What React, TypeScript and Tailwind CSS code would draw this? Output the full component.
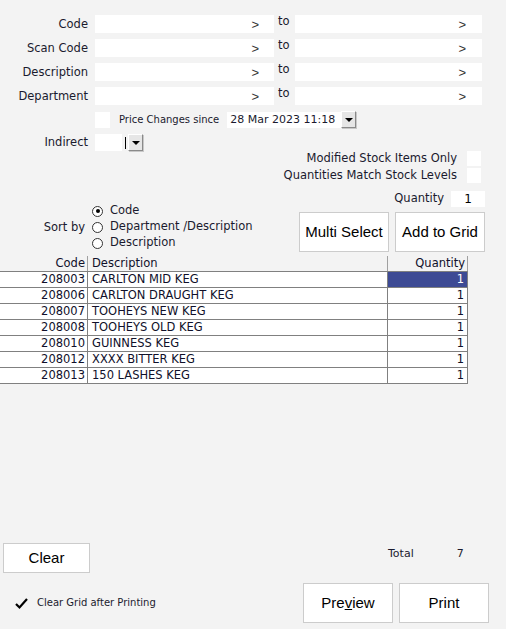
import React from "react";

const rows = [
  { code: "208003", desc: "CARLTON MID KEG", qty: 1 },
  { code: "208006", desc: "CARLTON DRAUGHT KEG", qty: 1 },
  { code: "208007", desc: "TOOHEYS NEW KEG", qty: 1 },
  { code: "208008", desc: "TOOHEYS OLD KEG", qty: 1 },
  { code: "208010", desc: "GUINNESS KEG", qty: 1 },
  { code: "208012", desc: "XXXX BITTER KEG", qty: 1 },
  { code: "208013", desc: "150 LASHES KEG", qty: 1 },
];

const ui = "font-['DejaVu_Sans',Verdana,sans-serif]";
const arial = "font-['Liberation_Sans',Arial,sans-serif]";

function RangeRow({ label }: { label: string }) {
  return (
    <div className="flex h-[18px] items-center">
      <div className="w-[88px] pt-[2px] text-right text-[11.5px] leading-none text-[#1a1a2e]">{label}</div>
      <div className="ml-[7px] flex h-full w-[179px] items-center justify-end bg-white pr-[15px]">
        <span className={`${arial} text-[13px] leading-none text-[#333]`}>&gt;</span>
      </div>
      <div className="h-full w-[21px] pl-[4px] pt-[1px] text-[11.5px] leading-none text-[#1a1a2e]">to</div>
      <div className="flex h-full w-[187px] items-center justify-end bg-white pr-[16px]">
        <span className={`${arial} text-[13px] leading-none text-[#333]`}>&gt;</span>
      </div>
    </div>
  );
}

function DropButton() {
  return (
    <div className="flex h-[17px] w-[15px] items-center justify-center border border-t-white border-l-white border-r-[#8a8a8a] border-b-[#8a8a8a] bg-[#e6e6e6] shadow-[1px_1px_0_#c8c8c8]">
      <div className="h-0 w-0 border-x-[4px] border-t-[4px] border-x-transparent border-t-black" />
    </div>
  );
}

function Radio({ checked, label }: { checked?: boolean; label: string }) {
  return (
    <div className="flex h-[16px] items-center">
      <div className="flex h-[11px] w-[11px] items-center justify-center rounded-full border border-[#333] bg-white">
        {checked && <div className="h-[4px] w-[4px] rounded-full bg-black" />}
      </div>
      <span className="ml-[7px] text-[11.5px] leading-none text-[#1a1a2e]">{label}</span>
    </div>
  );
}

function WinButton({ children, className = "" }: { children: React.ReactNode; className?: string }) {
  return (
    <button
      type="button"
      className={`${arial} flex items-center justify-center border border-[#cccccc] bg-white text-[15px] text-black ${className}`}
    >
      {children}
    </button>
  );
}

export default function App() {
  return (
    <div className={`${ui} h-[629px] w-[506px] overflow-hidden bg-[#f3f3f3]`}>
      <div className="flex flex-col gap-[6px] pt-[15px]">
        <RangeRow label="Code" />
        <RangeRow label="Scan Code" />
        <RangeRow label="Description" />
        <RangeRow label="Department" />
      </div>

      <div className="mt-[6px] flex h-[17px] items-center pl-[95px]">
        <div className="h-[16px] w-[15px] bg-white" />
        <span className="ml-[9px] text-[10px] leading-none text-[#1a1a2e]">Price Changes since</span>
        <div className="ml-[8px] flex h-[16px] w-[114px] items-center bg-white pl-[3px] text-[11px] leading-none text-[#1a1a2e]">
          28 Mar 2023 11:18
        </div>
        <DropButton />
      </div>

      <div className="mt-[6px] flex h-[17px] items-center">
        <div className="w-[88px] pt-[1px] text-right text-[11.5px] leading-none text-[#1a1a2e]">Indirect</div>
        <div className="ml-[7px] h-[17px] w-[27px] bg-white" />
        <div className="ml-[3px] h-[12px] w-[1px] bg-black" />
        <div className="ml-[2px]">
          <DropButton />
        </div>
      </div>

      <div className="flex flex-col items-end gap-[2px] pr-[25px]">
        <div className="flex h-[15px] items-center gap-[10px]">
          <span className="text-[11.5px] leading-none text-[#1a1a2e]">Modified Stock Items Only</span>
          <div className="h-[15px] w-[14px] bg-white" />
        </div>
        <div className="flex h-[15px] items-center gap-[10px]">
          <span className="text-[11.5px] leading-none text-[#1a1a2e]">Quantities Match Stock Levels</span>
          <div className="h-[15px] w-[14px] bg-white" />
        </div>
      </div>

      <div className="mt-[8px] flex">
        <div className="flex pt-[12px]">
          <div className="flex w-[86px] items-center justify-end pr-[1px] pt-[1px] text-[11.5px] leading-none text-[#1a1a2e]">
            Sort by
          </div>
          <div className="ml-[6px] flex flex-col">
            <Radio checked label="Code" />
            <Radio label="Department /Description" />
            <Radio label="Description" />
          </div>
        </div>
        <div className="ml-auto flex flex-col items-end pr-[21px]">
          <div className="flex h-[16px] items-center">
            <span className="text-[11.5px] leading-none text-[#1a1a2e]">Quantity</span>
            <div className="ml-[7px] flex h-[16px] w-[34px] items-center justify-center bg-white text-[12px] leading-none">
              1
            </div>
          </div>
          <div className="mt-[5px] flex gap-[6px]">
            <WinButton className="h-[40px] w-[90px]">Multi Select</WinButton>
            <WinButton className="h-[40px] w-[90px]">Add to Grid</WinButton>
          </div>
        </div>
      </div>

      <div className="mt-[4px] w-[468px] text-[11.5px] leading-none text-[#10102a]">
        <div className="flex h-[15px]">
          <div className="flex w-[88px] items-center justify-end border-r border-[#a0a0a0] pr-[2px]">Code</div>
          <div className="flex w-[300px] items-center border-r border-[#a0a0a0] pl-[4px]">Description</div>
          <div className="flex w-[80px] items-center justify-end border-r border-[#a0a0a0] pr-[2px]">Quantity</div>
        </div>
        <div className="border-t border-[#808080]">
          {rows.map((r, i) => (
            <div key={r.code} className="flex h-[16px] border-b border-[#808080] bg-white">
              <div className="flex w-[88px] items-center justify-end border-r border-[#808080] pr-[2px]">{r.code}</div>
              <div className="flex w-[300px] items-center border-r border-[#808080] pl-[4px]">{r.desc}</div>
              <div
                className={`flex w-[80px] items-center justify-end border-r border-[#808080] pr-[3px] ${
                  i === 0 ? "bg-[#3d4a94] text-white" : ""
                }`}
              >
                {r.qty}
              </div>
            </div>
          ))}
        </div>
      </div>

      <div className="mt-[159px] flex items-start">
        <WinButton className="ml-[3px] h-[30px] w-[87px]">Clear</WinButton>
        <span className="ml-[298px] mt-[5px] text-[11px] leading-none text-[#1a1a2e]">Total</span>
        <span className="ml-[43px] mt-[5px] text-[11px] leading-none text-[#1a1a2e]">7</span>
      </div>

      <div className="mt-[10px] flex items-center">
        <div className="ml-[15px] flex items-center">
          <svg width="13" height="13" viewBox="0 0 13 13">
            <path d="M1 7 L4.5 10.5 L12 2" fill="none" stroke="black" strokeWidth="2.2" />
          </svg>
          <span className="ml-[9px] text-[10px] leading-none text-[#1a1a2e]">Clear Grid after Printing</span>
        </div>
        <div className="ml-auto mr-[17px] flex gap-[6px]">
          <WinButton className="h-[40px] w-[90px]">
            Pre<span className="underline">v</span>iew
          </WinButton>
          <WinButton className="h-[40px] w-[90px]">Print</WinButton>
        </div>
      </div>
    </div>
  );
}
